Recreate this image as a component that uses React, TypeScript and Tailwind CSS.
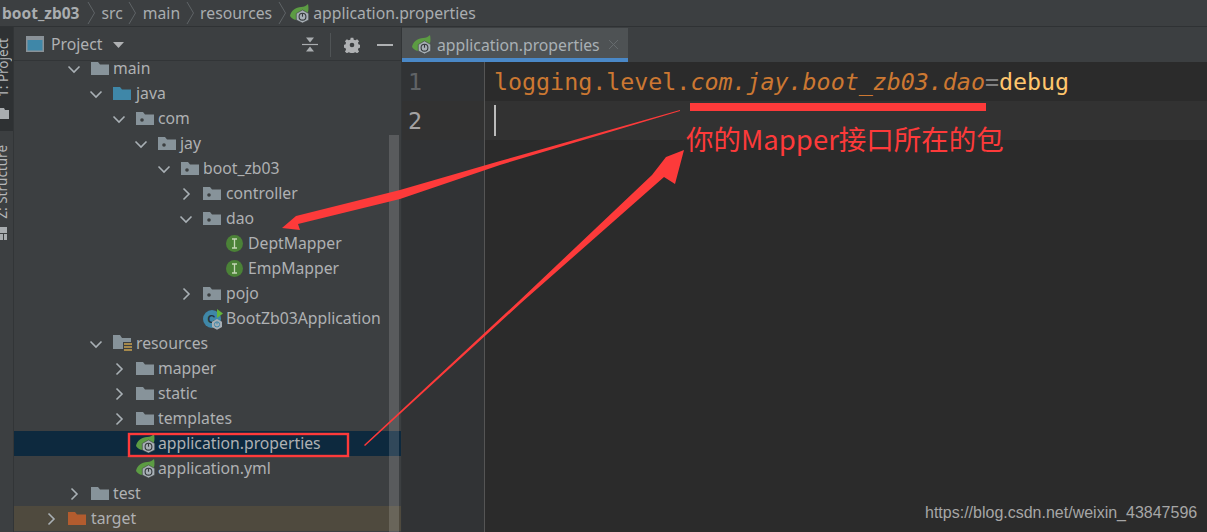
import React from "react";

const sans = "font-['Noto_Sans','Open_Sans',sans-serif]";

function Chevron({ open }: { open: boolean }) {
  return (
    <svg width="16" height="16" viewBox="0 0 16 16" fill="none" stroke="#a9b0b5" strokeWidth="1.6">
      {open ? <path d="M2.5 5.5 L8 11 L13.5 5.5" /> : <path d="M5.5 2.5 L11 8 L5.5 13.5" />}
    </svg>
  );
}

function Folder({ color = "#87939a", dot = false }: { color?: string; dot?: boolean }) {
  return (
    <svg width="18" height="13" viewBox="0 0 18 13">
      <path d="M0 0 H7 L9 2.5 H18 V13 H0 Z" fill={color} />
      {dot && <circle cx="6" cy="8" r="1.8" fill="#3c3f41" />}
    </svg>
  );
}

function Resources() {
  return (
    <svg width="19" height="18" viewBox="0 0 19 18">
      <path d="M0 0 H7 L9 3 H18 V14 H0 Z" fill="#87939a" />
      <rect x="10" y="7" width="9" height="11" fill="#3c3f41" />
      <path d="M11 9 H19 M11 12 H19 M11 15 H19" stroke="#c9a24f" strokeWidth="1.6" />
    </svg>
  );
}

function Spring() {
  return (
    <svg width="20" height="19" viewBox="0 0 20 19">
      <path d="M0 12 C1 6 6 3.5 11 3 C14 2.7 16 2 18 0 C19 5 18.5 9 16 11 L8 16 C5 16.5 2 15 0 12 Z" fill="#5c9c43" />
      <path d="M12.5 6 L18.7 9.5 V16 L12.5 19 L6.3 16 V9.5 Z" fill="#a7afb5" stroke="#3c3f41" strokeWidth="0.6" />
      <circle cx="12.5" cy="12.7" r="3.4" fill="none" stroke="#34383b" strokeWidth="1.1" />
      <path d="M12.5 9.4 V12.7" stroke="#34383b" strokeWidth="1.1" />
    </svg>
  );
}

function InterfaceIcon() {
  return (
    <span className="flex h-[17px] w-[17px] items-center justify-center rounded-full bg-[#4b8237]">
      <svg width="9" height="11" viewBox="0 0 9 11" stroke="#c5d6b6" strokeWidth="1.3" fill="none">
        <path d="M2 1 H7 M2 10 H7 M4.5 1 V10" />
      </svg>
    </span>
  );
}

function BootClass() {
  return (
    <svg width="20" height="22" viewBox="0 0 20 22">
      <circle cx="9" cy="11" r="9" fill="#3f87a8" />
      <path d="M14 1 L20 5.5 L14 10 Z" fill="#63b33c" />
      <text x="4.5" y="15" fontSize="11" fontWeight="700" fill="#23333c" fontFamily="Liberation Sans">C</text>
      <path d="M14 11 L19 13.8 V19 L14 21.8 L9 19 V13.8 Z" fill="#a7afb5" />
      <circle cx="14" cy="16.4" r="2.6" fill="none" stroke="#3f87a8" strokeWidth="1" />
      <path d="M14 14 V16.4" stroke="#3f87a8" strokeWidth="1" />
    </svg>
  );
}

type Row = {
  label: string;
  indent: number;
  chevron?: "open" | "closed";
  icon: React.ReactNode;
  rowClass?: string;
  gap: number;
};

const rows: Row[] = [
  { label: "java", indent: 74, chevron: "open", icon: <Folder color="#3f87a8" />, gap: 5 },
  { label: "com", indent: 97, chevron: "open", icon: <Folder dot />, gap: 4 },
  { label: "jay", indent: 119, chevron: "open", icon: <Folder dot />, gap: 4 },
  { label: "boot_zb03", indent: 142, chevron: "open", icon: <Folder dot />, gap: 4 },
  { label: "controller", indent: 164, chevron: "closed", icon: <Folder dot />, gap: 5 },
  { label: "dao", indent: 164, chevron: "open", icon: <Folder dot />, gap: 5 },
  { label: "DeptMapper", indent: 212, icon: <InterfaceIcon />, gap: 5 },
  { label: "EmpMapper", indent: 212, icon: <InterfaceIcon />, gap: 5 },
  { label: "pojo", indent: 164, chevron: "closed", icon: <Folder dot />, gap: 5 },
  { label: "BootZb03Application", indent: 189, icon: <BootClass />, gap: 3 },
  { label: "resources", indent: 74, chevron: "open", icon: <Resources />, gap: 4 },
  { label: "mapper", indent: 97, chevron: "closed", icon: <Folder />, gap: 4 },
  { label: "static", indent: 97, chevron: "closed", icon: <Folder />, gap: 4 },
  { label: "templates", indent: 97, chevron: "closed", icon: <Folder />, gap: 4 },
  { label: "application.properties", indent: 122, icon: <Spring />, rowClass: "bg-[#0d293e]", gap: 2 },
  { label: "application.yml", indent: 122, icon: <Spring />, gap: 2 },
  { label: "test", indent: 52, chevron: "closed", icon: <Folder />, gap: 4 },
  { label: "target", indent: 29, chevron: "closed", icon: <Folder color="#b35c2e" />, rowClass: "bg-[#4f4a3e]", gap: 5 },
];

function TreeRow({ r }: { r: Row }) {
  return (
    <div className={`flex h-[25px] items-center ${r.rowClass ?? ""}`} style={{ paddingLeft: r.indent }}>
      {r.chevron ? <Chevron open={r.chevron === "open"} /> : null}
      <span
        className={`flex items-center justify-center ${r.chevron ? "ml-[9px]" : ""}`}
        style={{ marginRight: r.gap }}
      >
        {r.icon}
      </span>
      <span className="text-[15.75px] leading-none whitespace-nowrap text-[#afb1b3]">{r.label}</span>
    </div>
  );
}

function Crumb({ children, bold }: { children: React.ReactNode; bold?: boolean }) {
  return (
    <>
      <span className={bold ? "mr-[2px] pt-px text-[15.5px] font-bold" : "pt-px"}>{children}</span>
      <svg width="9" height="22" viewBox="0 0 9 22" fill="none" stroke="#5f6467" strokeWidth="1" className="mx-[5.5px]">
        <path d="M1 0 L7.5 11 L1 22" />
      </svg>
    </>
  );
}

export default function App() {
  return (
    <div className={`relative h-[532px] w-[1207px] overflow-hidden bg-[#3c3f41] ${sans}`}>
      {/* breadcrumb */}
      <div className="flex h-[27px] items-center border-b border-[#2f3234] pl-[2px] text-[15.75px] whitespace-nowrap text-[#a9adb0]">
        <Crumb bold>boot_zb03</Crumb>
        <Crumb>src</Crumb>
        <Crumb>main</Crumb>
        <Crumb>resources</Crumb>
        <span className="mr-[3px] -ml-[2px]"><Spring /></span>
        <span className="pt-px">application.properties</span>
      </div>

      <div className="flex h-[505px]">
        {/* tool strip */}
        <div className="flex w-[14px] shrink-0 flex-col overflow-hidden border-r border-[#323537] text-[13.5px] leading-[14px] text-[#b4b6b8]">
          <div className="flex h-[104px] w-[13px] flex-col overflow-hidden bg-[#2e3133] pt-[11px]">
            <span className="-ml-[4px] block rotate-180 whitespace-nowrap [writing-mode:vertical-rl]">1: Project</span>
            <svg width="9" height="11" viewBox="0 0 9 11" className="mt-[11px] shrink-0"><path d="M0 0 H4 L5 2 H9 V11 H0 Z" fill="#a9adb0" /></svg>
          </div>
          <div className="mt-[14px] flex w-[13px] flex-col overflow-hidden">
            <span className="-ml-[5px] block rotate-180 whitespace-nowrap [writing-mode:vertical-rl]">Z: Structure</span>
            <svg width="8" height="13" viewBox="0 0 8 13" fill="#a9adb0" className="mt-[8px] shrink-0">
              <rect x="0" y="0" width="7" height="6" /><rect x="0" y="7" width="3" height="6" /><rect x="4" y="7" width="3" height="6" />
            </svg>
          </div>
        </div>

        {/* project panel */}
        <div className="relative flex w-[388px] shrink-0 flex-col border-r border-[#323537]">
          <div className="flex h-[34px] shrink-0 items-center border-b border-[#323537] pl-[12px]">
            <svg width="18" height="16" viewBox="0 0 18 16" className="mt-px">
              <rect x="0.75" y="0.75" width="16.5" height="14.5" fill="#3f87a8" stroke="#8a9298" strokeWidth="1.5" />
              <rect x="1" y="1" width="16" height="3" fill="#8a9298" />
            </svg>
            <span className="ml-[7px] pt-[3px] text-[15.75px] text-[#afb1b3]">Project</span>
            <svg width="11" height="6" viewBox="0 0 11 6" className="mt-[2px] ml-[11px]"><path d="M0 0 H11 L5.5 6 Z" fill="#afb1b3" /></svg>
            <div className="mt-[2px] ml-auto flex items-center">
              <svg width="16" height="17" viewBox="0 0 16 17" fill="#a9adb0" stroke="#a9adb0">
                <path d="M0 8.5 H16" strokeWidth="1.2" />
                <path d="M8 6.5 L4 1.5 H12 Z M8 10.5 L4 15.5 H12 Z" stroke="none" />
              </svg>
              <div className="mr-[13px] ml-[12px] h-[24px] w-px bg-[#505456]" />
              <svg width="16" height="16" viewBox="0 0 24 24" fill="#afb1b3">
                <path d="M10 1 h4 l.6 3 2.5 1 2.6-1.7 2.9 2.9-1.7 2.6 1 2.5 3 .6 v4 l-3 .6-1 2.5 1.7 2.6-2.9 2.9-2.6-1.7-2.5 1-.6 3 h-4 l-.6-3-2.5-1-2.6 1.7-2.9-2.9 1.7-2.6-1-2.5-3-.6 v-4 l3-.6 1-2.5-1.7-2.6 2.9-2.9 2.6 1.7 2.5-1 Z M12 8.5 a3.5 3.5 0 1 0 0 7 a3.5 3.5 0 1 0 0-7 Z" fillRule="evenodd" />
              </svg>
              <div className="mr-[8px] ml-[17px] h-[2px] w-[16px] bg-[#afb1b3]" />
            </div>
          </div>
          <div className="relative flex-1 overflow-hidden">
            <div className="-mt-[5px]">
              <TreeRow r={{ label: "main", indent: 52, chevron: "open", icon: <Folder />, gap: 4 }} />
              {rows.map((r) => (
                <TreeRow key={r.label} r={r} />
              ))}
            </div>
            <div className="absolute top-[74px] right-[2px] bottom-0 w-[10px] bg-[#ffffff]/15" />
          </div>
        </div>

        {/* editor */}
        <div className="flex min-w-0 flex-1 flex-col">
          <div className="flex h-[35px] shrink-0 items-stretch bg-[#3c3f41]">
            <div className="mt-px flex w-[226px] items-center border-b-[4px] border-[#4a88c7] bg-[#4e5254] pl-[10px]">
              <span className="pt-[2px]"><Spring /></span>
              <span className="ml-[5px] pt-[5px] text-[15.75px] text-[#a9b0b4]">application.properties</span>
              <svg width="11" height="11" viewBox="0 0 11 11" stroke="#666b6e" strokeWidth="1" className="mt-[3px] ml-[8px]">
                <path d="M1 1 L10 10 M10 1 L1 10" />
              </svg>
            </div>
          </div>
          <div className="flex flex-1 bg-[#2b2b2b] font-['DejaVu_Sans_Mono',monospace] text-[23.3px]">
            <div className="flex w-[83px] shrink-0 flex-col border-r border-[#555555] bg-[#313335]">
              <div className="flex h-[39px] items-center pt-px pl-[6px] text-[#606366]">1</div>
              <div className="flex h-[39px] items-center bg-[#323232] pt-px pl-[6px] text-[#a4a3a3]">2</div>
            </div>
            <div className="flex-1 pl-[9px]">
              <div className="flex h-[39px] items-center pt-px whitespace-nowrap text-[#cc7832]">
                <span>logging.level.</span>
                <span className="italic">com.jay.boot_zb03.dao</span>
                <span className="text-[#808080]">=</span>
                <span className="text-[#ffc66d]">debug</span>
              </div>
              <div className="-ml-[9px] flex h-[39px] items-center bg-[#323232] pl-[9px]">
                <div className="h-[31px] w-[2px] bg-[#bbbbbb]" />
              </div>
            </div>
          </div>
        </div>
      </div>

      {/* annotation overlay */}
      <svg className="pointer-events-none absolute inset-0" width="1207" height="532" viewBox="0 0 1207 532">
        <polygon points="680,110 500,161 400,190 296,216 282,228 300,230 298,224 400,199 500,165 680,111" fill="#fd3a3a" />
        <polygon points="364,445 519,301 652,175 666,157 684,150 675,184 664,177 521,303 365,446" fill="#fd3a3a" />
        <rect x="690" y="103" width="296" height="8" fill="#fd3a3a" />
        <rect x="129" y="434" width="219" height="22" fill="none" stroke="#fd3a3a" strokeWidth="2.4" />
      </svg>
      <div className="absolute top-[120px] left-[686px] font-['Noto_Sans_CJK_SC','Noto_Sans',sans-serif] text-[27.5px] leading-[36px] whitespace-nowrap text-[#fd3a3a]">
        你的Mapper接口所在的包
      </div>
      <div className="absolute top-[503px] left-[925px] font-['Liberation_Sans',sans-serif] text-[16px] leading-[20px] whitespace-nowrap text-[#a6a6a6]">
        https://blog.csdn.net/weixin_43847596
      </div>
    </div>
  );
}
